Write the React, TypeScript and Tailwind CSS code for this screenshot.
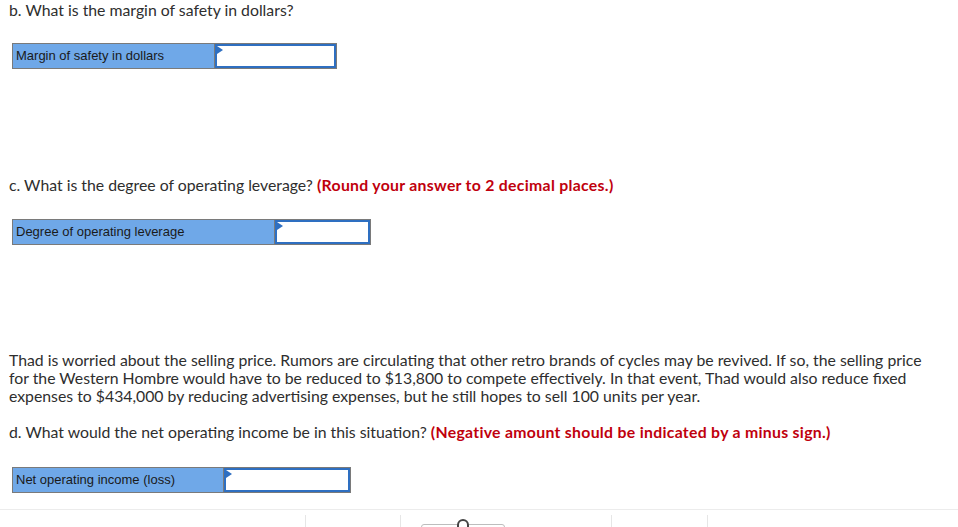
import React from 'react';

const font = { fontFamily: '"Lato", "Open Sans", sans-serif' };

function AnswerRow({ label, labelW, inputW }: { label: string; labelW: number; inputW: number }) {
  return (
    <div className="ml-3 flex h-[26px] w-fit border border-[#7a7a7a]">
      <div
        className="flex items-center border-r border-[#7a7a7a] bg-[#6fa8e8] pl-[3px] text-[13px] text-[#1a1a1a]"
        style={{ width: labelW, fontFamily: '"Liberation Sans", Arial, sans-serif' }}
      >
        {label}
      </div>
      <div className="relative border-2 border-[#2e6fc1] bg-white" style={{ width: inputW }}>
        <div className="absolute left-0 top-0 h-0 w-0 border-y-[4px] border-l-[6px] border-y-transparent border-l-[#2e6fc1]" />
      </div>
    </div>
  );
}

const Note = ({ children }: { children: React.ReactNode }) => (
  <span className="font-bold tracking-[0.3px] text-[#c0000d]">{children}</span>
);

export default function App() {
  return (
    <div
      className="h-[527px] w-[958px] overflow-hidden bg-white text-[15.8px] leading-[18px] text-[#2e2e2e]"
      style={font}
    >
      <p className="pl-[9px] pt-[1px]">b. What is the margin of safety in dollars?</p>
      <div className="mt-[24px]">
        <AnswerRow label="Margin of safety in dollars" labelW={202} inputW={121} />
      </div>

      <p className="mt-[107px] pl-[9px]">
        c. What is the degree of operating leverage? <Note>(Round your answer to 2 decimal places.)</Note>
      </p>
      <div className="mt-[25px]">
        <AnswerRow label="Degree of operating leverage" labelW={262} inputW={95} />
      </div>

      <p className="mt-[106px] pl-[9px]">
        Thad is worried about the selling price. Rumors are circulating that other retro brands of cycles may be revived. If so, the selling price
        <br />
        for the Western Hombre would have to be reduced to $13,800 to compete effectively. In that event, Thad would also reduce fixed
        <br />
        expenses to $434,000 by reducing advertising expenses, but he still hopes to sell 100 units per year.
      </p>
      <p className="mt-[18px] pl-[9px]">
        d. What would the net operating income be in this situation?{' '}
        <Note>(Negative amount should be indicated by a minus sign.)</Note>
      </p>
      <div className="mt-[26px]">
        <AnswerRow label="Net operating income (loss)" labelW={211} inputW={126} />
      </div>

      <div className="mt-[16px] flex h-[20px] border-t border-[#ececec]">
        <div className="w-[305px]" />
        <div className="mt-[5px] w-[95px] border-l border-[#e6e6e6]" />
        <div className="mt-[5px] flex w-[211px] border-l border-[#e6e6e6] pl-[20px]">
          <div className="mt-[9px] flex h-[10px] w-[84px] justify-center rounded-t-[3px] border border-[#bdbdbd] bg-white">
            <div className="-mt-[6px] h-[14px] w-[12px] rounded-full border-2 border-[#444] bg-white" />
          </div>
        </div>
        <div className="mt-[5px] w-[96px] border-l border-[#e6e6e6]" />
        <div className="mt-[5px] flex-1 border-l border-[#e6e6e6]" />
      </div>
    </div>
  );
}
